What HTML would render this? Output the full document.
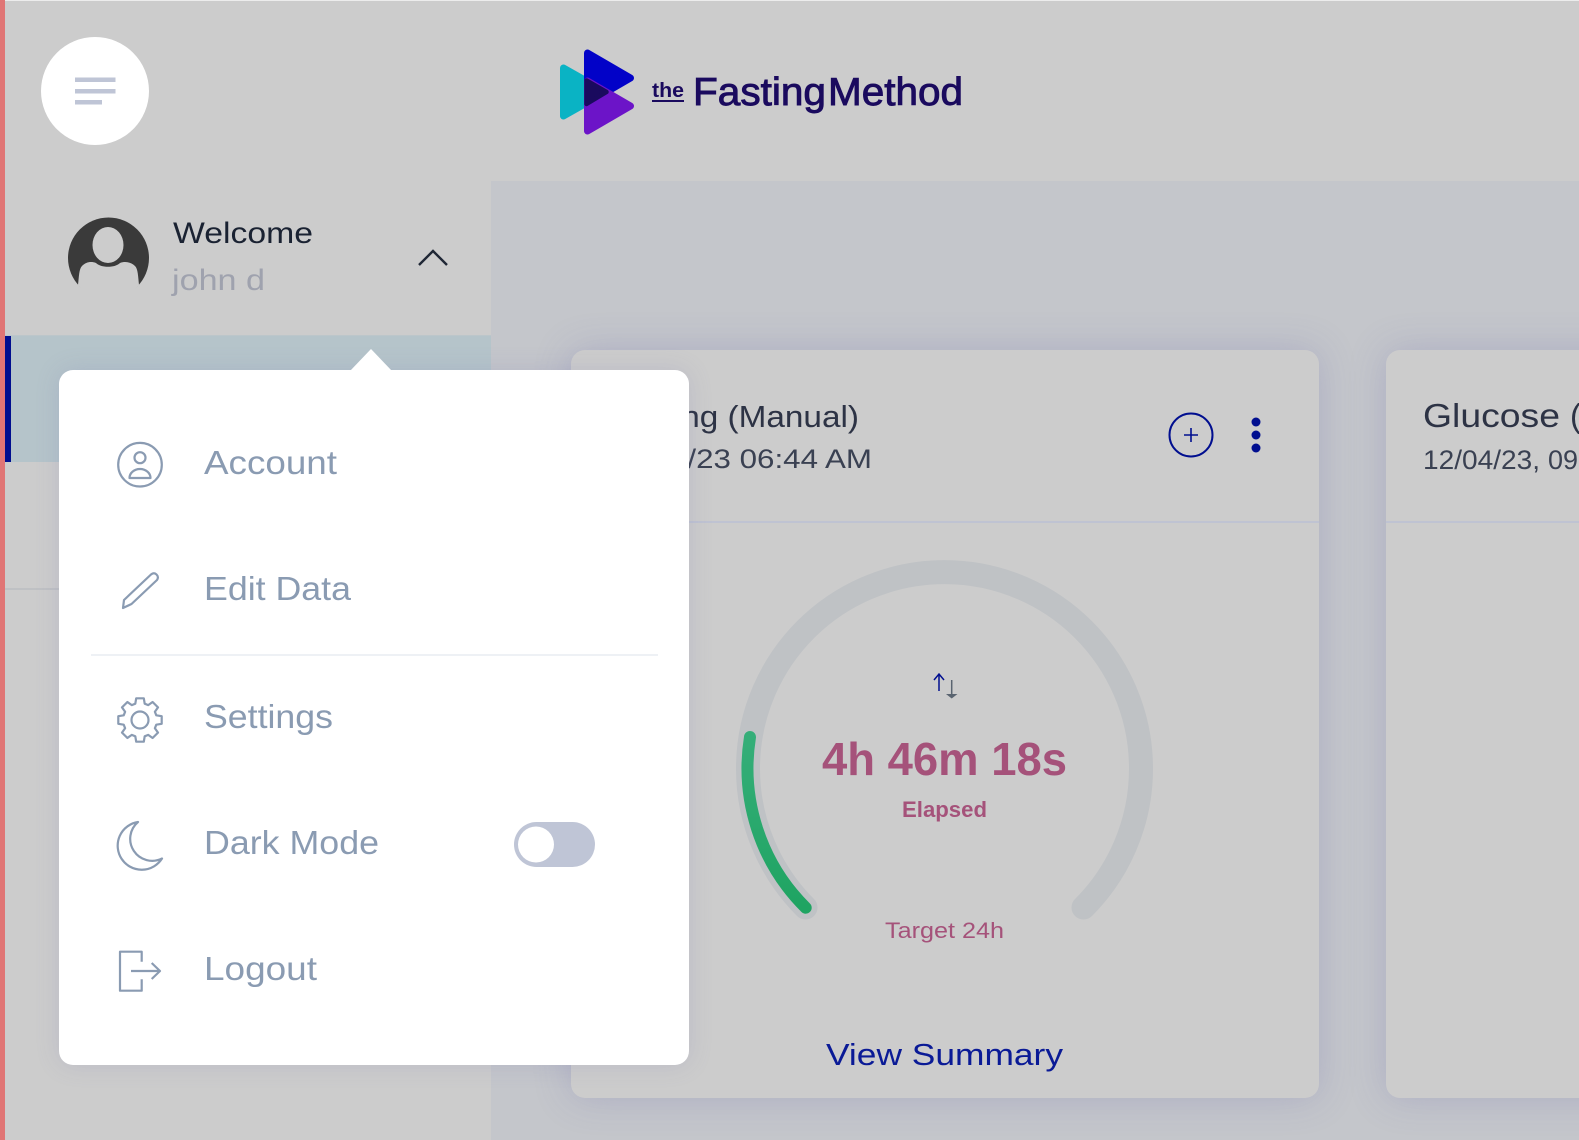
<!DOCTYPE html>
<html lang="en">
<head>
<meta charset="utf-8">
<title>The Fasting Method</title>
<style>
html,body{margin:0;padding:0;background:#cccccc;}
#page{position:relative;width:1579px;height:1140px;overflow:hidden;background:#cccccc;font-family:"Liberation Sans",sans-serif;}
.abs{position:absolute;}
svg{position:absolute;left:0;top:0;}
text{font-family:"Liberation Sans",sans-serif;}
.m{font-size:33px;fill:#8a9bb2;}
.i{fill:none;stroke:#8a9bb2;stroke-width:2.2;stroke-linejoin:round;}
</style>
</head>
<body>
<div id="page">
  <div class="abs" style="left:0;top:0;width:1579px;height:1px;background:#ececec"></div>
  <div class="abs" style="left:5px;top:335px;width:486px;height:1px;background:#bcc6ca"></div>
  <div class="abs" style="left:5px;top:336px;width:486px;height:126px;background:#b5c4ca"></div>
  <div class="abs" style="left:5px;top:336px;width:6px;height:126px;background:#000e8f"></div>
  <div class="abs" style="left:5px;top:588px;width:486px;height:2px;background:#bfc1c4"></div>

  <div class="abs" style="left:491px;top:181px;width:1088px;height:959px;background:#c4c6cb;overflow:hidden">
    <div class="abs" style="left:80px;top:169px;width:748px;height:748px;background:#cccccc;border-radius:14px;box-shadow:0 0 36px rgba(100,100,170,.25)"></div>
    <div class="abs" style="left:80px;top:340px;width:748px;height:2px;background:#bfc3d2"></div>
    <div class="abs" style="left:895px;top:169px;width:300px;height:748px;background:#cccccc;border-radius:14px;box-shadow:0 0 36px rgba(100,100,170,.25)"></div>
    <div class="abs" style="left:895px;top:340px;width:300px;height:2px;background:#bfc3d2"></div>
  </div>
  <div class="abs" style="left:0;top:0;width:5px;height:1140px;background:#e07575"></div>

  <svg width="1579" height="1140" viewBox="0 0 1579 1140" xmlns="http://www.w3.org/2000/svg">
    <circle cx="95" cy="91" r="54" fill="#fff"/>
    <rect x="75" y="77.500" width="40.500" height="4.500" fill="#bfc5d6"/>
    <rect x="75" y="89" width="40.500" height="4.500" fill="#bfc5d6"/>
    <rect x="75" y="100" width="27" height="4.500" fill="#bfc5d6"/>

    <!-- logo -->
    <g stroke-linejoin="round">
      <polygon points="563.500,68 606,92 563.500,116" fill="#0ab3c4" stroke="#0ab3c4" stroke-width="7"/>
      <polygon points="587.500,53 630.500,78 587.500,103" fill="#0202c8" stroke="#0202c8" stroke-width="7"/>
      <polygon points="587.500,81 630.500,106 587.500,131" fill="#6c14c8" stroke="#6c14c8" stroke-width="7"/>
      <polygon points="586.500,80.500 606.500,92 586.500,104" fill="#1a0a5e" stroke="#1a0a5e" stroke-width="4.500"/>
    </g>
    <text x="652" y="97" font-size="20" font-weight="700" fill="#1a0a5e" textLength="32" lengthAdjust="spacingAndGlyphs">the</text>
    <rect x="652" y="100" width="32" height="2" fill="#1a0a5e"/>
    <text x="693" y="105" font-size="39" fill="#1a0a5e" stroke="#1a0a5e" stroke-width=".9" textLength="133" lengthAdjust="spacingAndGlyphs">Fasting</text>
    <text x="828" y="105" font-size="39" fill="#1a0a5e" stroke="#1a0a5e" stroke-width=".9" textLength="135" lengthAdjust="spacingAndGlyphs">Method</text>

    <!-- user -->
    <circle cx="108.500" cy="258" r="40.500" fill="#3a3a3a"/>
    <path d="M78 285 C79 276 79 269 82 266 C86 262 91 261 96 263 C101 268 115 268 120 263 C125 261 131 262 135 266 C138 269 138 276 139 285 L124 300 L92 300 Z" fill="#cccccc"/>
    <ellipse cx="108" cy="245" rx="15.500" ry="18" fill="#cccccc"/>
    <text x="173" y="243" font-size="30" fill="#1a2232" textLength="140" lengthAdjust="spacingAndGlyphs">Welcome</text>
    <text x="172" y="290" font-size="30" fill="#9fa2ae" textLength="93" lengthAdjust="spacingAndGlyphs">john d</text>
    <path d="M419 265 L433 251 L447 265" fill="none" stroke="#1f2735" stroke-width="2.400"/>

    <!-- card content -->
    <text x="609" y="427" font-size="31" fill="#2d3345" textLength="250" lengthAdjust="spacingAndGlyphs">Fasting (Manual)</text>
    <text x="609" y="468" font-size="27" fill="#3a4152" textLength="263" lengthAdjust="spacingAndGlyphs">12/04/23 06:44 AM</text>
    <circle cx="1191" cy="435" r="21.500" fill="none" stroke="#000e8f" stroke-width="2"/>
    <path d="M1191 428 V442 M1184 435 H1198" stroke="#000e8f" stroke-width="1.600" fill="none"/>
    <circle cx="1256" cy="422" r="4.500" fill="#000e8f"/>
    <circle cx="1256" cy="435" r="4.500" fill="#000e8f"/>
    <circle cx="1256" cy="448" r="4.500" fill="#000e8f"/>

    <path d="M805.500 907.500 A196.500 196.500 0 1 1 1083.500 907.500" fill="none" stroke="#bfc2c5" stroke-width="24" stroke-linecap="round"/>
    <defs><linearGradient id="g" x1="0" y1="0" x2="0" y2="1"><stop offset="0" stop-color="#35ae79"/><stop offset="1" stop-color="#1fa462"/></linearGradient></defs>
    <path d="M805.700 907.700 A196.500 196.500 0 0 1 750 737" fill="none" stroke="url(#g)" stroke-width="12" stroke-linecap="round"/>

    <path d="M939 691 V674 M934 680 L939 674 L944 680" fill="none" stroke="#000e8f" stroke-width="1.500"/>
    <path d="M951.700 680 V695" fill="none" stroke="#5a6470" stroke-width="1.500"/>
    <polygon points="946,694 957.500,694 951.700,698.500" fill="#5a6470"/>

    <text x="822" y="775" font-size="46" font-weight="700" fill="#a5527a" textLength="245" lengthAdjust="spacingAndGlyphs">4h 46m 18s</text>
    <text x="902" y="817" font-size="22" font-weight="700" fill="#a5527a" textLength="85" lengthAdjust="spacingAndGlyphs">Elapsed</text>
    <text x="885" y="938" font-size="22" fill="#a5527a" textLength="119" lengthAdjust="spacingAndGlyphs">Target 24h</text>
    <text x="826" y="1065" font-size="31" fill="#0a1a96" textLength="237" lengthAdjust="spacingAndGlyphs">View Summary</text>

    <text x="1423" y="427" font-size="33" fill="#2d3345" textLength="137" lengthAdjust="spacingAndGlyphs">Glucose</text>
    <text x="1570" y="427" font-size="33" fill="#2d3345">(</text>
    <text x="1423" y="469" font-size="27" fill="#3a4152" textLength="117" lengthAdjust="spacingAndGlyphs">12/04/23,</text>
    <text x="1548" y="469" font-size="27" fill="#3a4152">09</text>
  </svg>

  <!-- popup -->
  <div class="abs" style="left:59px;top:370px;width:630px;height:695px;background:#fff;border-radius:14px;box-shadow:0 0 24px rgba(110,110,170,.18)"></div>

  <svg width="1579" height="1140" viewBox="0 0 1579 1140" xmlns="http://www.w3.org/2000/svg">
    <polygon points="350,371 371,349 392,371" fill="#fff"/>
    <rect x="91" y="654" width="567" height="2" fill="#eef1f5"/>

    <circle class="i" cx="140" cy="464.700" r="21.800"/>
    <circle class="i" cx="140" cy="457.700" r="5.500"/>
    <path class="i" d="M129.500 478 A10.500 9 0 0 1 150.500 478 Z"/>
    <text class="m" x="204" y="474" textLength="133" lengthAdjust="spacingAndGlyphs">Account</text>

    <path class="i" d="M123 608 L124 600 L151 574.500 Q154 572 156.500 574.500 Q159 577 157 580 L131.500 604 Z"/>
    <text class="m" x="204" y="600" textLength="147" lengthAdjust="spacingAndGlyphs">Edit Data</text>

    <g transform="translate(140 720)">
      <polygon class="i" points="-4.700,-16.300 -3.800,-21.700 3.800,-21.700 4.700,-16.300 8.200,-14.900 12.600,-18 18,-12.600 14.900,-8.200 16.300,-4.700 21.700,-3.800 21.700,3.800 16.300,4.700 14.900,8.200 18,12.600 12.600,18 8.200,14.900 4.700,16.300 3.800,21.700 -3.800,21.700 -4.700,16.300 -8.200,14.900 -12.600,18 -18,12.600 -14.900,8.200 -16.300,4.700 -21.700,3.800 -21.700,-3.800 -16.300,-4.700 -14.900,-8.200 -18,-12.600 -12.600,-18 -8.200,-14.900"/>
      <circle class="i" cx="0" cy="0" r="8.500"/>
    </g>
    <text class="m" x="204" y="728" textLength="129" lengthAdjust="spacingAndGlyphs">Settings</text>

    <path class="i" d="M138 822 A24 24 0 1 0 162 858.500 A22 22 0 0 1 138 822 Z"/>
    <text class="m" x="204" y="854" textLength="175" lengthAdjust="spacingAndGlyphs">Dark Mode</text>
    <rect x="514" y="822" width="81" height="45" rx="22.500" fill="#bfc5d6"/>
    <circle cx="536" cy="844.500" r="18" fill="#fff"/>

    <path class="i" d="M141.700 961.700 V951.700 H120 V990.700 H141.700 V979.300"/>
    <path class="i" d="M131 971 H160 M151.700 963 L160 971 L151.700 979"/>
    <text class="m" x="204" y="980" textLength="113" lengthAdjust="spacingAndGlyphs">Logout</text>
  </svg>
</div>
</body>
</html>
